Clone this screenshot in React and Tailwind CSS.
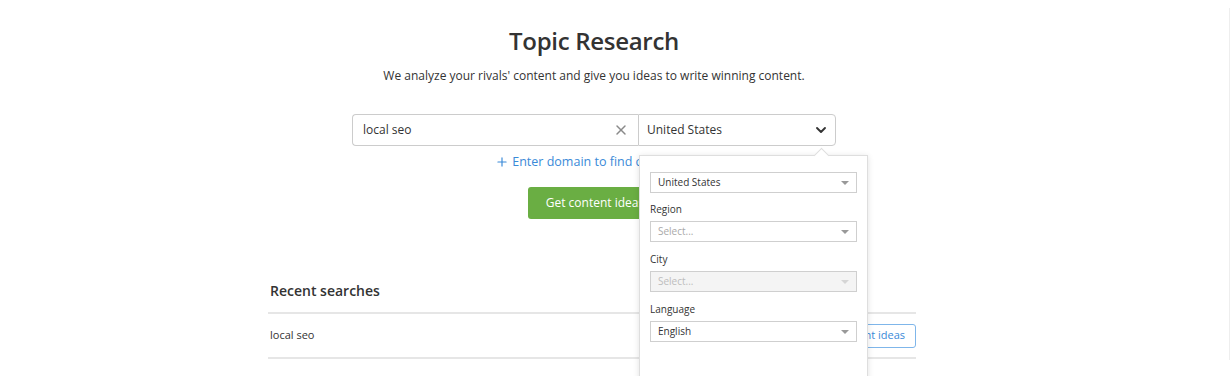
import { X, ChevronDown, Plus } from 'lucide-react'

const font = { fontFamily: '"Open Sans", "Noto Sans", sans-serif' }

function SmallSelect({ value, placeholder, disabled }) {
  return (
    <div
      className={`flex items-center justify-between h-[21px] px-[7px] border border-[#cfcfcf] text-[10px] ${
        disabled ? 'bg-[#f4f4f4] text-[#bdbdbd]' : 'bg-white'
      } ${value ? 'text-[#333]' : 'text-[#a9a9a9]'}`}
    >
      <span>{value || placeholder}</span>
      <span className={`w-0 h-0 border-x-[4px] border-x-transparent border-t-[4px] ${disabled ? 'border-t-[#d5d5d5]' : 'border-t-[#999]'}`} />
    </div>
  )
}

export default function App() {
  return (
    <div className="relative w-[1230px] h-[376px] overflow-hidden bg-white text-[#333]" style={font}>
      <div className="absolute right-0 top-[8px] w-px h-[352px] bg-[#eeeeee]" />

      <div className="w-[1188px] flex flex-col items-center pt-[25px]">
        <h1 className="text-[24px] font-semibold leading-[32px] text-[#333] tracking-[-0.3px]">Topic Research</h1>
        <p className="mt-[10px] text-[12px] leading-[18px] text-[#333]">
          We analyze your rivals' content and give you ideas to write winning content.
        </p>

        <div className="mt-[29px] flex">
          <div className="w-[286px] h-[32px] flex items-center justify-between pl-[10px] pr-[9px] border border-[#cccccc] border-r-0 rounded-l-[4px] text-[12px]">
            <span>local seo</span>
            <X size={16} strokeWidth={2.2} className="text-[#8a8a8a]" />
          </div>
          <div className="relative">
            <div className="w-[198px] h-[32px] flex items-center justify-between pl-[8px] pr-[6px] border border-[#cccccc] rounded-r-[4px] text-[12px]">
              <span>United States</span>
              <ChevronDown size={16} strokeWidth={2.8} className="text-[#333]" />
            </div>

            <div className="absolute left-[1px] top-[41px] z-10 w-[229px] h-[230px] bg-white border border-[#dedede] shadow-[0_1px_6px_rgba(0,0,0,0.12)] pt-[16px] px-[10px]">
              <div className="absolute -top-[6px] left-[176px] w-[11px] h-[11px] bg-white border-l border-t border-[#dedede] rotate-45" />
              <div className="flex flex-col">
                <SmallSelect value="United States" />
                <div className="mt-[9px] mb-[5px] text-[10px] leading-[14px]">Region</div>
                <SmallSelect placeholder="Select..." />
                <div className="mt-[10px] mb-[5px] text-[10px] leading-[14px]">City</div>
                <SmallSelect placeholder="Select..." disabled />
                <div className="mt-[10px] mb-[5px] text-[10px] leading-[14px]">Language</div>
                <SmallSelect value="English" />
              </div>
            </div>
          </div>
        </div>

        <div className="mt-[7px] flex items-center text-[12.5px] leading-[18px] text-[#3a8ad8] translate-x-[32px]">
          <Plus size={14} strokeWidth={2} className="mr-[3px]" />
          <span>Enter domain to find competitors' content</span>
        </div>

        <button className="mt-[16px] h-[32px] px-[18px] rounded-[3px] bg-[#6aae43] text-white text-[12px] translate-x-[1px]">
          Get content ideas
        </button>

        <div className="mt-[62px] w-[648px] -translate-x-[2px]">
          <div className="pl-[2px] pb-[11px] text-[14px] font-semibold leading-[20px]">Recent searches</div>
          <div className="h-[47px] flex items-center justify-between border-t-[2px] border-b-[2px] border-[#e6e6e6] pl-[2px]">
            <span className="text-[11px]">local seo</span>
            <button className="h-[24px] px-[10px] border border-[#7fb6ea] rounded-[3px] text-[11px] text-[#3a8ad8]">
              Get content ideas
            </button>
          </div>
        </div>
      </div>
    </div>
  )
}
